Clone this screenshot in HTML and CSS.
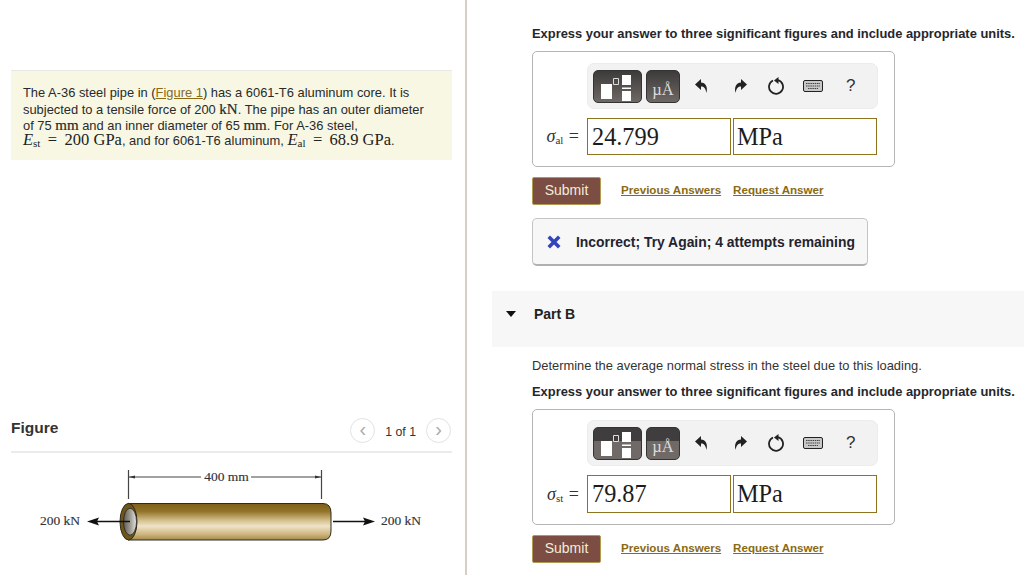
FILE: index.html
```html
<!DOCTYPE html>
<html lang="en">
<head>
<meta charset="utf-8">
<title>Steel pipe with aluminum core</title>
<link rel="stylesheet" href="styles.css">
</head>
<body>
<div class="page">
  <aside class="left">
    <div class="problem">
      <div class="ln">The A-36 steel pipe in (<a class="fig-link" href="#">Figure 1</a>) has a 6061-T6 aluminum core. It is</div>
      <div class="ln">subjected to a tensile force of 200 <span class="m mb">kN</span>. The pipe has an outer diameter</div>
      <div class="ln">of 75 <span class="m mb">mm</span> and an inner diameter of 65 <span class="m mb">mm</span>. For A-36 steel,</div>
      <div class="ln last"><span class="m big"><i>E</i><sub>st</sub> &#x2009;=&#x2009; 200 GPa</span>, and for 6061-T6 aluminum, <span class="m big"><i>E</i><sub>al</sub> &#x2009;=&#x2009; 68.9 GPa</span>.</div>
    </div>
    <div class="fig-head">
      <h2 class="fig-title">Figure</h2>
      <div class="fig-nav">
        <span class="circle">&#x2039;</span>
        <span class="count">1 of 1</span>
        <span class="circle">&#x203A;</span>
      </div>
    </div>
    <svg class="diagram" viewBox="11 453 441 122" width="441" height="122">
      <defs>
        <linearGradient id="tube" x1="0" y1="0" x2="0" y2="1">
          <stop offset="0" stop-color="#7d5f18"/>
          <stop offset="0.22" stop-color="#94742a"/>
          <stop offset="0.48" stop-color="#d8c494"/>
          <stop offset="0.62" stop-color="#efe3c8"/>
          <stop offset="0.85" stop-color="#cdb47c"/>
          <stop offset="1" stop-color="#a48a4a"/>
        </linearGradient>
        <linearGradient id="core" x1="0" y1="0" x2="1" y2="0">
          <stop offset="0" stop-color="#5f5b52"/>
          <stop offset="0.6" stop-color="#a9a69e"/>
          <stop offset="1" stop-color="#e8e7e2"/>
        </linearGradient>
      </defs>
      <path class="dim" d="M128.5 470V499M321.5 470V499"/>
      <path class="dim" d="M129 477H201M251 477H321"/>
      <path class="tip" d="M129 477l6-1.5v3zM321 477l-6-1.5v3z"/>
      <text class="lab" x="226.500" y="481" text-anchor="middle">400 mm</text>
      <path class="tube" d="M128 503.500H323Q331 503.500 331 513V531Q331 540 323 540H128Z"/>
      <ellipse class="rim" cx="128.500" cy="521.700" rx="8.500" ry="18.300"/>
      <ellipse class="inner" cx="130" cy="521.700" rx="6.500" ry="13.500"/>
      <path class="shaft" d="M96 521.500H130M333 521.500H366"/>
      <path class="head" d="M87 521.500l12-4-2 4 2 4zM375 521.500l-12-4 2 4-2 4z"/>
      <text class="lab" x="60" y="525" text-anchor="middle">200 kN</text>
      <text class="lab" x="401" y="525" text-anchor="middle">200 kN</text>
    </svg>
  </aside>

  <main class="right">
    <section class="part">
      <p class="instr first">Express your answer to three significant figures and include appropriate units.</p>
      <div class="answer">
        <div class="toolbar">
          <span class="tbtn tpl">
            <svg viewBox="0 0 49 33" width="49" height="33"><path class="white" d="M8 14h11v15H8zM29 5h9v10h-9zM29 21h9v10h-9zM29 17.500h9v1.500h-9z"/><path class="white-o" d="M20.500 8.500h5v6h-5z"/></svg>
          </span>
          <span class="tbtn unit"><span class="unit-t">&#xB5;&#xC5;</span></span>
          <svg class="ico undo" viewBox="0 0 16 16" width="16" height="16"><path d="M7 1L1 6.500 7 12V8.500c3 0 4.500 1.500 5.500 6.500 1.500-6-1-10.500-5.500-10.500z"/></svg>
          <svg class="ico redo" viewBox="0 0 16 16" width="16" height="16"><path d="M9 1l6 5.500L9 12V8.500c-3 0-4.500 1.500-5.500 6.500C2 9 4.500 4.500 9 4.500z"/></svg>
          <svg class="ico reset" viewBox="0 0 18 18" width="18" height="18"><path class="ring" d="M6 3.500A7 7 0 1 0 11 3.100"/><path d="M11.500 0v7L7 3.500z"/></svg>
          <svg class="ico kbd" viewBox="0 0 20 12" width="20" height="12"><rect class="kb" x="0.500" y="0.500" width="19" height="11" rx="1.500"/><path class="keys" d="M3 3.500h14M3 6h14M5 8.500h10"/></svg>
          <span class="help">?</span>
        </div>
        <div class="row">
          <span class="label"><i>&#x3C3;</i><sub>al</sub> =</span>
          <span class="field val">24.799</span>
          <span class="field uni">MPa</span>
        </div>
      </div>
      <div class="actions">
        <button class="submit">Submit</button>
        <a class="link" href="#">Previous Answers</a>
        <a class="link" href="#">Request Answer</a>
      </div>
      <div class="feedback">
        <svg class="x" viewBox="0 0 14 14" width="14" height="14"><path d="M3 .500L7 4.500 11 .500 13.500 3 9.500 7l4 4-2.500 2.500-4-4-4 4L.500 11l4-4-4-4z"/></svg>
        <span>Incorrect; Try Again; 4 attempts remaining</span>
      </div>
    </section>

    <div class="part-head">
      <span class="caret"></span>
      <span class="part-title">Part B</span>
    </div>

    <section class="part">
      <p class="desc">Determine the average normal stress in the steel due to this loading.</p>
      <p class="instr">Express your answer to three significant figures and include appropriate units.</p>
      <div class="answer b">
        <div class="toolbar">
          <span class="tbtn tpl sharp">
            <svg viewBox="0 0 49 33" width="49" height="33"><path class="white" d="M8 14h11v15H8zM29 5h9v10h-9zM29 21h9v10h-9zM29 17.500h9v1.500h-9z"/><path class="white-o" d="M20.500 8.500h5v6h-5z"/></svg>
          </span>
          <span class="tbtn unit sharp"><span class="unit-t">&#xB5;&#xC5;</span></span>
          <svg class="ico undo" viewBox="0 0 16 16" width="16" height="16"><path d="M7 1L1 6.500 7 12V8.500c3 0 4.500 1.500 5.500 6.500 1.500-6-1-10.500-5.500-10.500z"/></svg>
          <svg class="ico redo" viewBox="0 0 16 16" width="16" height="16"><path d="M9 1l6 5.500L9 12V8.500c-3 0-4.500 1.500-5.500 6.500C2 9 4.500 4.500 9 4.500z"/></svg>
          <svg class="ico reset" viewBox="0 0 18 18" width="18" height="18"><path class="ring" d="M6 3.500A7 7 0 1 0 11 3.100"/><path d="M11.500 0v7L7 3.500z"/></svg>
          <svg class="ico kbd" viewBox="0 0 20 12" width="20" height="12"><rect class="kb" x="0.500" y="0.500" width="19" height="11" rx="1.500"/><path class="keys" d="M3 3.500h14M3 6h14M5 8.500h10"/></svg>
          <span class="help">?</span>
        </div>
        <div class="row tall">
          <span class="label"><i>&#x3C3;</i><sub>st</sub> =</span>
          <span class="field val">79.87</span>
          <span class="field uni">MPa</span>
        </div>
      </div>
      <div class="actions">
        <button class="submit">Submit</button>
        <a class="link" href="#">Previous Answers</a>
        <a class="link" href="#">Request Answer</a>
      </div>
    </section>
  </main>
</div>
</body>
</html>
```
FILE: styles.css
```css
* { box-sizing: border-box; }
html, body { margin: 0; padding: 0; height: 100%; overflow: hidden; background: #fff; }
body { font-family: "Liberation Sans", Arial, sans-serif; color: #222; }
.page { display: flex; width: 1024px; height: 575px; overflow: hidden; }

/* left column */
.left { width: 467px; flex: none; height: 575px; border-right: 2px solid #d8cfc4; padding: 70px 13px 0 11px; }
.problem { height: 90px; background: #f7f7e4; border-top: 1px solid #e8e8e4; padding: 14px 0 0 12px; font-size: 12.900px; color: #2a2a2a; }
.ln { height: 16px; line-height: 16px; white-space: nowrap; }
.ln.last { margin-top: -1px; }
.fig-link { color: #8a6a14; text-decoration: underline; }
.m { font-family: "Liberation Serif", serif; }
.mb { font-size: 15px; -webkit-text-stroke: 0.2px #222; }
.big { font-size: 16.500px; color: #222; }
.big sub { font-size: 11px; line-height: 0; vertical-align: -2px; }
.fig-head { margin-top: 257px; height: 36px; border-bottom: 2px solid #ebebeb; display: flex; justify-content: space-between; align-items: flex-start; }
.fig-title { margin: 2px 0 0; font-size: 15.500px; line-height: 18px; font-weight: 700; color: #333; }
.fig-nav { display: flex; align-items: center; gap: 10px; font-size: 12.300px; color: #333; margin-top: 1px; padding-right: 1px; }
.circle { width: 25px; height: 25px; border: 1px solid #e2e2e2; border-radius: 50%; display: flex; align-items: center; justify-content: center; color: #aaa; font-size: 20px; line-height: 20px; padding-bottom: 3px; }
.count { margin-top: 2px; }
.diagram { display: block; }
.dim { stroke: #444; stroke-width: 1.200; fill: none; }
.tip { fill: #333; }
.lab { font-family: "Liberation Serif", serif; font-size: 13.500px; fill: #33333a; stroke: #33333a; stroke-width: 0.150; }
.tube { fill: url(#tube); stroke: #2e2a20; stroke-width: 1; }
.rim { fill: #6f5516; stroke: #2e2a20; stroke-width: 1; }
.inner { fill: url(#core); stroke: #222; stroke-width: 0.800; }
.shaft { stroke: #111; stroke-width: 1.600; fill: none; }
.head { fill: #111; }

/* right column */
.right { flex: 1; min-width: 0; padding: 0 0 0 25px; }
.part { padding-left: 40px; }
.instr { margin: 0; font-size: 12.900px; font-weight: 700; line-height: 16px; color: #26262b; white-space: nowrap; }
.instr.first { padding-top: 26px; }
.desc { margin: 10px 0 9px; font-size: 12.900px; line-height: 18px; color: #333; white-space: nowrap; }
.answer { width: 363px; height: 116px; margin-top: 9px; border: 1px solid #b5b5b5; border-radius: 5px; padding: 11px 17px 0 54px; }
.answer.b { padding-top: 10px; }
.toolbar { width: 291px; height: 46px; background: #f2f2f2; border: 1px solid #ececec; border-radius: 7px; display: flex; align-items: center; padding-left: 5px; }
.tbtn { display: block; height: 33px; border-radius: 5px; border: 1px solid #333; background: linear-gradient(#3d3a3a, #6e6866); flex: none; }
.tbtn.sharp { background: linear-gradient(#3f3d3d 0 42%, #6f6a68 42% 100%); }
.tpl { width: 49px; }
.tpl svg { display: block; margin: -1px; }
.white { fill: #fff; }
.white-o { fill: none; stroke: #ddd; stroke-width: 1; }
.unit { width: 34px; margin-left: 4px; text-align: center; overflow: hidden; }
.unit-t { font-family: "Liberation Serif", serif; font-size: 16.500px; line-height: 37px; color: #ddd; }
.ico { display: block; flex: none; fill: #222; }
.undo { margin-left: 14px; }
.redo { margin-left: 22px; }
.reset { margin-left: 19px; }
.ring { fill: none; stroke: #222; stroke-width: 1.800; }
.kbd { margin-left: 18px; }
.kb { fill: #c8c8c8; stroke: #222; stroke-width: 1; }
.keys { stroke: #444; stroke-width: 1.200; stroke-dasharray: 1.500 .7; fill: none; }
.help { margin-left: 23px; font-size: 17px; color: #333; }
.row { display: flex; align-items: stretch; margin-top: 9px; height: 37px; margin-left: -44px; }
.row.tall { height: 38px; }
.label { width: 44px; flex: none; font-family: "Liberation Serif", serif; font-size: 18px; color: #333; padding-right: 8px; text-align: right; align-self: center; white-space: nowrap; }
.label sub { font-size: 11px; line-height: 0; vertical-align: -2px; margin-right: 1px; }
.field { display: block; border: 1px solid #8f7420; font-family: "Liberation Serif", serif; font-size: 24.300px; line-height: 36px; color: #1c1c1c; }
.val { width: 144px; padding-left: 4px; }
.uni { width: 144px; margin-left: 2px; padding-left: 3px; }
.actions { display: flex; align-items: flex-start; margin-top: 10px; height: 28px; }
.submit { width: 69px; height: 28px; padding: 0 0 2px; background: #7b4d43; border: 1px solid #b39a52; border-radius: 2px; color: #f3ecd9; font-family: inherit; font-size: 14px; }
.link { font-size: 11.600px; font-weight: 700; line-height: 14px; margin-top: 6px; color: #8a6a14; text-decoration: underline; margin-left: 12px; white-space: nowrap; }
.submit + .link { margin-left: 20px; }
.feedback { width: 336px; height: 48px; margin-top: 13px; padding-top: 1px; background: #f7f7f7; border: 1px solid #c4c4c4; border-bottom: 2px solid #b0b0b0; border-radius: 5px; display: flex; align-items: center; gap: 15px; padding-left: 14px; font-size: 13.900px; font-weight: 700; color: #1f2430; white-space: nowrap; }
.x { fill: #3344bb; flex: none; }
.part-head { height: 56px; margin-top: 25px; background: #f7f7f7; display: flex; align-items: flex-start; padding: 14px 0 0 14px; }
.caret { width: 0; height: 0; margin-top: 6px; border-left: 5.500px solid transparent; border-right: 5.500px solid transparent; border-top: 6px solid #111; }
.part-title { margin-left: 18px; font-size: 14px; line-height: 18px; font-weight: 700; color: #222; }
```
